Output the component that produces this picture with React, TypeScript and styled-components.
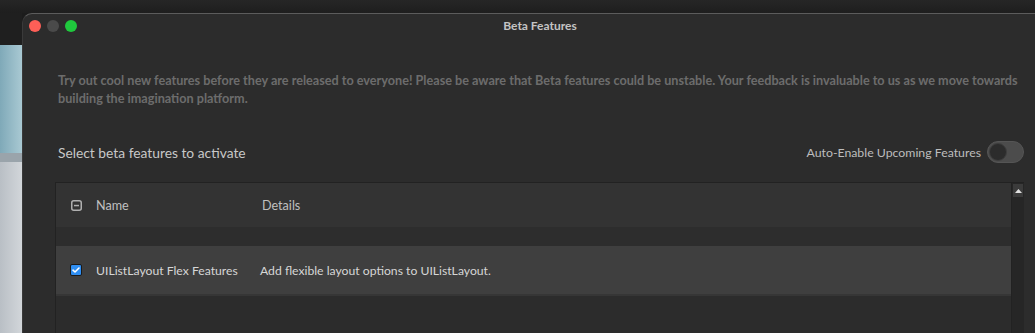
import React from "react";
import styled, { createGlobalStyle } from "styled-components";

const GlobalStyle = createGlobalStyle`
  html, body {
    margin: 0;
    padding: 0;
    background: #1c1c1c;
    overflow: hidden;
  }
  * { box-sizing: border-box; }
`;

const Screen = styled.div`
  width: 1035px;
  height: 333px;
  display: grid;
  grid-template-columns: 22px 1fr;
  grid-template-rows: 13px 1fr;
  overflow: hidden;
  font-family: Lato, "Open Sans", sans-serif;
`;

const MenuStrip = styled.div`
  grid-column: 1 / 3;
  background: linear-gradient(#262626, #1e1e1e);
`;

const Desktop = styled.div`
  display: grid;
  grid-template-rows: 32px 108px 9px 1fr;
`;

const DesktopBand = styled.div<{ $bg: string }>`
  background: ${(p) => p.$bg};
`;

const Window = styled.div`
  min-width: 0;
  background: #2c2c2c;
  border-top: 1px solid #5c5c5c;
  border-left: 1px solid #3a3a3a;
  border-top-left-radius: 10px;
  display: flex;
  flex-direction: column;
`;

const TitleBar = styled.div`
  height: 23px;
  display: flex;
  align-items: center;
  padding-left: 6px;
  position: relative;
`;

const Lights = styled.div`
  display: flex;
  gap: 6px;
`;

const Light = styled.span<{ $c: string }>`
  width: 12px;
  height: 12px;
  border-radius: 50%;
  background: ${(p) => p.$c};
`;

const Title = styled.div`
  position: absolute;
  left: 0;
  right: 0;
  top: 4px;
  text-align: center;
  font-size: 12px;
  font-weight: 700;
  color: #c4c4c4;
  padding-left: 22px;
`;

const Content = styled.div`
  padding: 35px 11px 0 32px;
  display: flex;
  flex-direction: column;
`;

const Intro = styled.p`
  margin: 0;
  padding-left: 3px;
  font-size: 12.65px;
  font-weight: 700;
  line-height: 18px;
  color: #6c6c6c;
  white-space: nowrap;
`;

const SelectRow = styled.div`
  margin-top: 30px;
  height: 28px;
  display: flex;
  align-items: center;
  justify-content: space-between;
  padding-left: 3px;
`;

const SectionLabel = styled.span`
  font-size: 13.8px;
  color: #c8c8c8;
`;

const AutoEnable = styled.label`
  display: flex;
  align-items: center;
  gap: 6px;
  font-size: 12.3px;
  color: #bdbdbd;
`;

const Toggle = styled.span`
  width: 37px;
  height: 22px;
  border-radius: 11px;
  background: #4c4c4c;
  border: 1px solid #555;
  padding: 1px;
  display: flex;
`;

const Knob = styled.span`
  width: 18px;
  height: 18px;
  border-radius: 50%;
  background: #2c2c2c;
  border: 1px solid #3e3e3e;
`;

const TableFrame = styled.div`
  margin-top: 16px;
  display: flex;
  height: 160px;
  border-top: 1px solid #222;
  border-left: 1px solid #222;
`;

const Table = styled.div`
  flex: 1;
  display: flex;
  flex-direction: column;
  overflow: hidden;
`;

const Columns = styled.div`
  display: grid;
  grid-template-columns: 40px 164px 1fr;
  align-items: center;
`;

const HeaderRow = styled(Columns)`
  height: 44px;
  background: #333333;
  font-size: 12.6px;
  color: #c0c0c0;
  position: relative;
  z-index: 1;
  grid-template-columns: 40px 166px 1fr;
`;

const Body = styled.div`
  overflow: hidden;
  flex: 1;
`;

const Row = styled(Columns)<{ $selected?: boolean; $offset?: number }>`
  height: 50px;
  margin-top: ${(p) => p.$offset ?? 0}px;
  background: ${(p) => (p.$selected ? "#3f3f3f" : "#2d2d2d")};
  border-bottom: 2px solid ${(p) => (p.$selected ? "#363636" : "#2d2d2d")};
  font-size: 12.2px;
  color: #d6d6d6;
`;

const BoxCell = styled.div`
  display: flex;
  justify-content: center;
`;

const Scrollbar = styled.div`
  width: 13px;
  background: #262626;
  border-left: 1px solid #222;
  padding: 1px;
`;

const ScrollButton = styled.div`
  height: 13px;
  background: #3b3b3b;
  display: flex;
  align-items: center;
  justify-content: center;
`;

const MinusBox = () => (
  <svg width="11" height="11" viewBox="0 0 11 11">
    <rect x="0.75" y="0.75" width="9.5" height="9.5" rx="2" fill="none" stroke="#b0b0b0" strokeWidth="1.5" />
    <rect x="3" y="4.8" width="5" height="1.5" fill="#b0b0b0" />
  </svg>
);

const CheckBox = ({ checked }: { checked?: boolean }) => (
  <svg width="12" height="12" viewBox="0 0 12 12">
    <rect x="0.5" y="0.5" width="11" height="11" rx="1.5" fill={checked ? "#2f8ef2" : "#2d2d2d"} stroke={checked ? "#1a1a1a" : "#8a8a8a"} />
    {checked && <path d="M3 6.2 L5 8 L9 4" fill="none" stroke="#fff" strokeWidth="1.6" strokeLinecap="round" strokeLinejoin="round" />}
  </svg>
);

const UpArrow = () => (
  <svg width="7" height="4" viewBox="0 0 7 4">
    <path d="M0 4 L3.5 0 L7 4 Z" fill="#e0e0e0" />
  </svg>
);

export default function App() {
  return (
    <>
      <GlobalStyle />
      <Screen>
        <MenuStrip />
        <Desktop>
          <DesktopBand $bg="#1f1f1f" />
          <DesktopBand $bg="linear-gradient(90deg, #7fa9b8, #a9c9d3)" />
          <DesktopBand $bg="#9aa4ab" />
          <DesktopBand $bg="linear-gradient(90deg, #b9bfc5, #d2d6da)" />
        </Desktop>
        <Window>
          <TitleBar>
            <Lights>
              <Light $c="#fe5f57" />
              <Light $c="#4a4a4a" />
              <Light $c="#1fc93d" />
            </Lights>
            <Title>Beta Features</Title>
          </TitleBar>
          <Content>
            <Intro>
              Try out cool new features before they are released to everyone! Please be aware that Beta features could be unstable. Your feedback is invaluable to us as we move towards
              <br />
              building the imagination platform.
            </Intro>
            <SelectRow>
              <SectionLabel>Select beta features to activate</SectionLabel>
              <AutoEnable>
                Auto-Enable Upcoming Features
                <Toggle>
                  <Knob />
                </Toggle>
              </AutoEnable>
            </SelectRow>
            <TableFrame>
              <Table>
                <HeaderRow>
                  <BoxCell>
                    <MinusBox />
                  </BoxCell>
                  <div>Name</div>
                  <div>Details</div>
                </HeaderRow>
                <Body>
                  <Row $offset={-31}>
                    <BoxCell>
                      <CheckBox />
                    </BoxCell>
                    <div />
                    <div />
                  </Row>
                  <Row $selected>
                    <BoxCell>
                      <CheckBox checked />
                    </BoxCell>
                    <div>UIListLayout Flex Features</div>
                    <div>Add flexible layout options to UIListLayout.</div>
                  </Row>
                </Body>
              </Table>
              <Scrollbar>
                <ScrollButton>
                  <UpArrow />
                </ScrollButton>
              </Scrollbar>
            </TableFrame>
          </Content>
        </Window>
      </Screen>
    </>
  );
}
